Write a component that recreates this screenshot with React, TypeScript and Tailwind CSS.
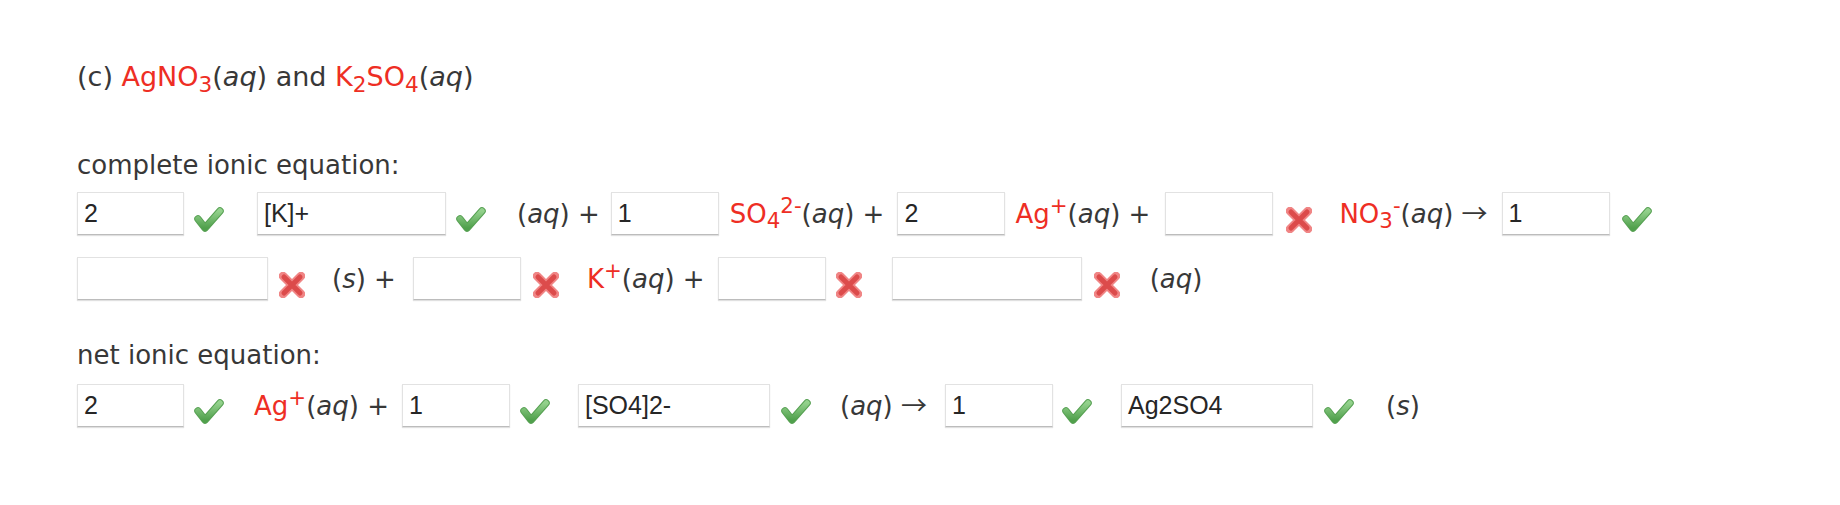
import React from 'react';

const RED = 'text-[#ee2e24]';

const Box = ({ value = '', className = '' }: { value?: string; className?: string }) => (
    <div
        className={`h-[43px] shrink-0 flex items-center pl-[6px] bg-white border border-[#e2e2e2] border-b-[#bcbcbc] shadow-[0_1px_1px_rgba(0,0,0,0.12)] text-[25px] text-[#262626] ${className}`}
        style={{ fontFamily: '"Liberation Sans", Arial, sans-serif' }}
    >
        {value}
    </div>
);

const Check = ({ className = '' }: { className?: string }) => (
    <svg width="30" height="26" viewBox="0 0 30 26" className={`shrink-0 mt-[13px] ${className}`}>
        <defs>
            <linearGradient id="chk" x1="0" y1="0" x2="0" y2="1">
                <stop offset="0" stopColor="#93d18c" />
                <stop offset="1" stopColor="#50a04c" />
            </linearGradient>
        </defs>
        <path d="M4 12 L11 21 L26 4" fill="none" stroke="#56a052" strokeWidth="7.5" strokeLinecap="round" strokeLinejoin="round" />
        <path d="M4 12 L11 21 L26 4" fill="none" stroke="url(#chk)" strokeWidth="5.5" strokeLinecap="round" strokeLinejoin="round" />
    </svg>
);

const Cross = ({ className = '' }: { className?: string }) => (
    <svg width="30" height="28" viewBox="0 0 30 28" className={`shrink-0 mt-[12px] ${className}`}>
        <defs>
            <filter id="soft" x="-20%" y="-20%" width="140%" height="140%">
                <feGaussianBlur stdDeviation="0.6" />
            </filter>
        </defs>
        <g filter="url(#soft)" strokeLinecap="round">
            <path d="M6 5 L24 23 M24 5 L6 23" stroke="#f08585" strokeWidth="8.5" />
            <path d="M7 6 L23 22 M23 6 L7 22" stroke="#dc4b4b" strokeWidth="5" />
        </g>
    </svg>
);

const Sub = ({ children, title = false }: { children: React.ReactNode; title?: boolean }) => (
    <span className={`relative leading-none ${title ? 'text-[0.8em] top-[0.3em]' : 'text-[0.82em] top-[0.25em]'}`}>{children}</span>
);

const Sup = ({ children }: { children: React.ReactNode }) => (
    <span className="relative leading-none text-[0.82em] -top-[0.45em]">{children}</span>
);

const Aq = () => (
    <>
        (<i>aq</i>)
    </>
);

// thin, full-width arrow like the original
const Arrow = () => (
    <span className="text-[26px] leading-none" style={{ fontFamily: '"Noto Sans CJK JP", "Noto Sans CJK SC", sans-serif' }}>
        →
    </span>
);

const T = ({ children, className = '' }: { children: React.ReactNode; className?: string }) => (
    <span className={`shrink-0 whitespace-pre leading-[32px] ${className}`}>{children}</span>
);

export default function App() {
    return (
        <div
            className="w-[1840px] h-[505px] bg-white text-[#383838] text-[26px] pl-[77px] pt-[61px]"
            style={{ fontFamily: '"DejaVu Sans", Verdana, sans-serif' }}
        >
            <div className="leading-[32px] whitespace-pre text-[27px]">
                (c) <span className={RED}>AgNO<Sub title>3</Sub></span>
                <Aq /> and <span className={RED}>K<Sub title>2</Sub>SO<Sub title>4</Sub></span>
                <Aq />
            </div>

            <div className="mt-[56px] leading-[32px]">complete ionic equation:</div>

            <div className="mt-[11px] h-[43px] flex items-center">
                <Box value="2" className="w-[107px]" />
                <Check className="ml-[10px]" />
                <Box value="[K]+" className="w-[189px] ml-[33px]" />
                <Check className="ml-[10px]" />
                <T className="ml-[31px]"><Aq /> +</T>
                <Box value="1" className="w-[108px] ml-[11px]" />
                <T className="ml-[11px]">
                    <span className={RED}>SO<Sub>4</Sub><Sup>2-</Sup></span><Aq /> +
                </T>
                <Box value="2" className="w-[108px] ml-[13px]" />
                <T className="ml-[10px]">
                    <span className={RED}>Ag<Sup>+</Sup></span><Aq /> +
                </T>
                <Box className="w-[108px] ml-[15px]" />
                <Cross className="ml-[11px]" />
                <T className="ml-[25px]">
                    <span className={RED}>NO<Sub>3</Sub><Sup>-</Sup></span><Aq /> <Arrow />
                </T>
                <Box value="1" className="w-[108px] ml-[14px]" />
                <Check className="ml-[12px]" />
            </div>

            <div className="mt-[22px] h-[43px] flex items-center">
                <Box className="w-[191px]" />
                <Cross className="ml-[9px]" />
                <T className="ml-[25px]">(<i>s</i>) +</T>
                <Box className="w-[108px] ml-[17px]" />
                <Cross className="ml-[10px]" />
                <T className="ml-[26px]">
                    <span className={RED}>K<Sup>+</Sup></span><Aq /> +
                </T>
                <Box className="w-[108px] ml-[13px]" />
                <Cross className="ml-[8px]" />
                <Box className="w-[190px] ml-[28px]" />
                <Cross className="ml-[10px]" />
                <T className="ml-[28px]"><Aq /></T>
            </div>

            <div className="mt-[39px] leading-[32px]">net ionic equation:</div>

            <div className="mt-[13px] h-[43px] flex items-center">
                <Box value="2" className="w-[107px]" />
                <Check className="ml-[10px]" />
                <T className="ml-[30px]">
                    <span className={RED}>Ag<Sup>+</Sup></span><Aq /> +
                </T>
                <Box value="1" className="w-[108px] ml-[13px]" />
                <Check className="ml-[10px]" />
                <Box value="[SO4]2-" className="w-[192px] ml-[28px]" />
                <Check className="ml-[11px]" />
                <T className="ml-[29px]"><Aq /> <Arrow /></T>
                <Box value="1" className="w-[108px] ml-[18px]" />
                <Check className="ml-[9px]" />
                <Box value="Ag2SO4" className="w-[192px] ml-[29px]" />
                <Check className="ml-[11px]" />
                <T className="ml-[32px]">(<i>s</i>)</T>
            </div>
        </div>
    );
}
